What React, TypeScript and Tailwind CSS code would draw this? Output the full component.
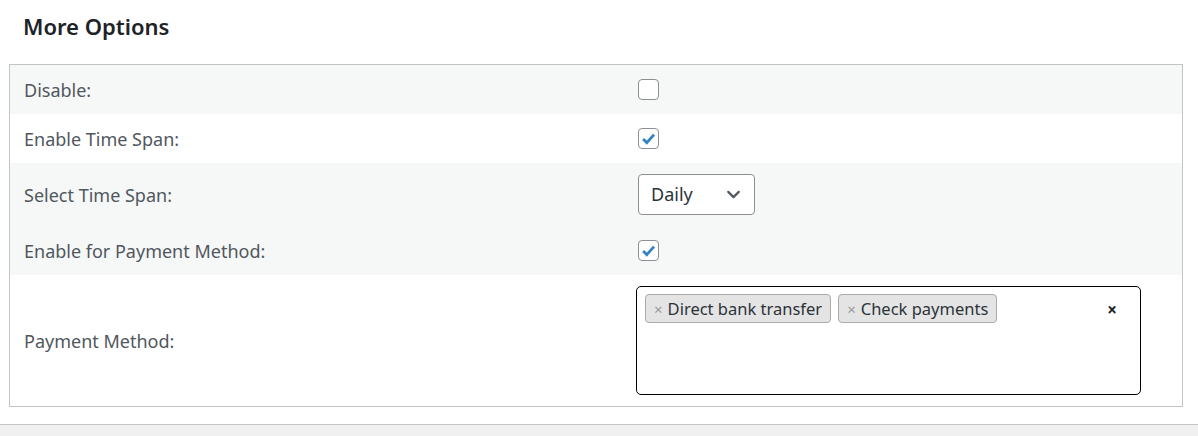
import { ChevronDown } from 'lucide-react'

const font = { fontFamily: '"Noto Sans", "Open Sans", sans-serif' }

function Checkbox({ checked }: { checked?: boolean }) {
  return (
    <span className="flex h-[21px] w-[21px] items-center justify-center rounded-[4px] border border-[#8c8f94] bg-white">
      {checked && (
        <svg viewBox="0 0 20 20" className="h-[20px] w-[20px]">
          <path d="M4.3 10 L8.2 13.8 L15.8 5.4" fill="none" stroke="#3582c4" strokeWidth="3" strokeLinecap="butt" strokeLinejoin="miter" />
        </svg>
      )}
    </span>
  )
}

function Tag({ label }: { label: string }) {
  return (
    <span className="flex h-[29px] items-center rounded-[4px] border border-[#aaaaaa] bg-[#e4e4e4] pl-[8px] pr-[8px] pt-[2px] text-[16.5px] text-[#2c3338]">
      <span className="mr-[5px] text-[15px] text-[#999999]">×</span>
      {label}
    </span>
  )
}

function Row({ label, gray, className, children }: { label: string; gray?: boolean; className: string; children: React.ReactNode }) {
  return (
    <div className={`grid grid-cols-[628px_1fr] items-center ${gray ? 'bg-[#f6f7f7]' : 'bg-white'} ${className}`}>
      <div className="pl-[14px] pt-[2px] text-[18px] text-[#50575e]">{label}</div>
      <div className="flex items-center">{children}</div>
    </div>
  )
}

export default function App() {
  return (
    <div className="flex h-[436px] w-[1198px] flex-col bg-white" style={font}>
      <div className="flex flex-1 flex-col px-[9px]">
        <h2 className="h-[40px] pl-[14px] pt-[12px] text-[22px] leading-[28px] font-semibold text-[#1d2327]">More Options</h2>
        <div className="mt-[24px] w-[1174px] border border-[#c3c4c7]">
          <Row label="Disable:" gray className="h-[49px]">
            <Checkbox />
          </Row>
          <Row label="Enable Time Span:" className="h-[49px]">
            <Checkbox checked />
          </Row>
          <Row label="Select Time Span:" gray className="h-[63px]">
            <div className="flex h-[41px] w-[117px] items-center justify-between rounded-[4px] border border-[#8c8f94] bg-white pl-[12px] pr-[10px] text-[18px] text-[#2c3338]">
              Daily
              <ChevronDown className="h-[21px] w-[21px] text-[#50575e]" strokeWidth={2.5} />
            </div>
          </Row>
          <Row label="Enable for Payment Method:" gray className="h-[49px]">
            <Checkbox checked />
          </Row>
          <Row label="Payment Method:" className="h-[131px]">
            <div className="-ml-[2px] flex h-[109px] w-[505px] items-start justify-between rounded-[5px] border border-black bg-white pl-[8px] pr-[23px] pt-[7px]">
              <div className="flex gap-[7px]">
                <Tag label="Direct bank transfer" />
                <Tag label="Check payments" />
              </div>
              <span className="mt-[3px] text-[17px] font-bold text-[#1d2327]">×</span>
            </div>
          </Row>
        </div>
      </div>
      <div className="h-[12px] border-t border-[#c3c4c7] bg-[#f0f0f1]" />
    </div>
  )
}
